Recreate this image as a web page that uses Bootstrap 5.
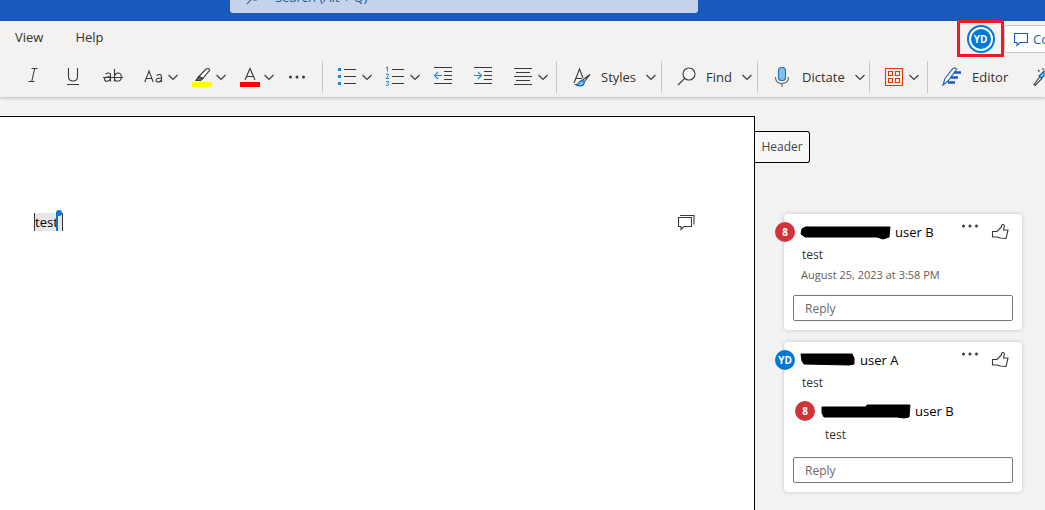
<!DOCTYPE html>
<html lang="en">
<head>
<meta charset="utf-8">
<meta name="viewport" content="width=device-width, initial-scale=1">
<title>Document editor</title>
<link href="https://cdn.jsdelivr.net/npm/bootstrap@5.3.0/dist/css/bootstrap.min.css" rel="stylesheet">
<style>
  body { font-family: "Open Sans", "Noto Sans", sans-serif; font-size: 13px; line-height: 20px; color: #323130; background: #f2f2f2; overflow: hidden; }
  svg { display: block; flex: none; fill: none; stroke: #3b3a39; stroke-width: 1.1; overflow: visible; }
  button { font: inherit; color: inherit; background: none; border: 0; padding: 0; }
  .app-top { height: 21px; background: #185abd; overflow: hidden; }
  .app-search { flex: 0 0 468px; height: 32px; margin: -19px 0 0 22%; background: #c5d3e8; border-radius: 3px; padding: 0 16px; gap: 13px; }
  .app-search input { border: 0; background: none; padding: 0; font-size: 13px; color: #2b579a; outline: 0; }
  .app-search input::placeholder { color: #2b579a; opacity: 1; }
  .ribbon { background: #f3f2f1; box-shadow: 0 1px 3px rgba(0,0,0,.25); }
  .tabs { height: 36px; }
  .tabs nav { gap: 32px; padding: 0 0 4px 15px; }
  .tabs a { color: #323130; text-decoration: none; }
  .tabs-end { flex: 0 0 88px; min-width: 0; overflow-x: clip; }
  .presence { flex: 0 0 47px; height: 37px; margin-top: -1px; border: 3px solid #ed1c24; }
  .face { width: 20px; height: 20px; border-radius: 50%; flex: none; color: #fff; font-size: 10px; font-weight: 700; line-height: 20px; text-align: center; background: #0078d7; }
  .face-red { background: #d13438; }
  .face-lg { width: 28px; height: 28px; line-height: 20px; border: 2px solid #0078d7; padding: 2px; background: #fff; }
  .face-lg span { display: block; border-radius: 50%; background: #0078d7; }
  .comments-btn { flex: none; height: 28px; margin-top: 4px; border: 1px solid #c8c6c4; border-radius: 3px; background: #fff; color: #185abd; padding: 0 9px; gap: 4px; }
  .tools { height: 40px; padding-left: 13px; overflow-x: clip; }
  .tool { flex: 0 0 40px; height: 40px; }
  .tool-split { flex: 0 0 48px; padding-left: 11px; gap: 3px; height: 40px; }
  .tool-text { flex: none; height: 40px; padding: 0 7px 0 11px; gap: 9px; text-align: left; }
  .w-styles { width: 95px; } .w-find { width: 86px; } .w-dictate { width: 102px; } .w-editor { width: 90px; }
  .rule { flex: 0 0 1px; height: 32px; background: #c8c6c4; margin: 0 4px 0 5px; }
  .paper { background: #fff; border: solid #000; border-width: 1px 1px 0 0; padding: 96px 60px 0 34px; }
  .desk { padding-top: 19px; }
  .selected-text { background: #e6e6e6; color: #000; height: 18px; line-height: 18px; border: solid #333; border-width: 0 1px; padding-right: 4px; position: relative; font-size: 13px; }
  .caret { position: absolute; top: 0; left: 21px; width: 2px; height: 18px; background: #0078d7; }
  .caret::before { content: ""; position: absolute; top: -3px; left: 0; width: 6px; height: 6px; border-radius: 50%; background: #0078d7; }
  .review { flex: 0 0 290px; }
  .header-tag { margin-top: 15px; width: 55px; height: 32px; font-size: 12px; background: #f8f8f8; border: 1px solid #000; border-left: 0; border-radius: 0 3px 3px 0; color: #444; }
  .threads { margin: 51px 23px 0 29px; gap: 12px; }
  .thread { background: #fff; border-radius: 4px; box-shadow: 0 0 4px rgba(0,0,0,.18); padding: 7px 9px 9px; }
  .who { height: 22px; margin-left: -18px; gap: 6px; color: #000; font-size: 13px; }
  .who-reply { margin: 7px 0 0 2px; }
  .who svg.ink { fill: #000; stroke: #000; stroke-width: 1; }
  .who .acts { gap: 12px; padding-right: 4px; }
  .said { font-size: 12px; padding-left: 9px; margin: 2px 0 0; }
  .stamp { font-size: 11px; padding-left: 8px; margin: 0; color: #605e5c; }
  .said-reply { padding: 0 0 2px 32px; margin-top: 3px; }
  .answer { width: 100%; height: 26px; border: 1px solid #767676; border-radius: 2px; padding: 0 11px; font-size: 12px; display: block; margin-top: 10px; background: #fff; }
  .answer::placeholder { color: #6b6967; opacity: 1; }
</style>
</head>
<body class="d-flex flex-column min-vh-100">
<svg width="0" height="0" class="position-absolute" aria-hidden="true">
  <symbol id="chev" viewBox="0 0 12 20"><path d="M1.500 8 6 12.500 10.500 8"/></symbol>
  <symbol id="thumb" viewBox="0 0 18 18"><path d="M1.500 8.500h4.500L10.500 4V2.500q1.500-2 3 0L12.500 7h4.500l-2 8.500-6-.500-2.500-1h-5z"/></symbol>
  <symbol id="dots" viewBox="0 0 18 6"><g fill="#3b3a39" stroke="none"><circle cx="2.500" cy="3" r="1.500"/><circle cx="9" cy="3" r="1.500"/><circle cx="15.500" cy="3" r="1.500"/></g></symbol>
</svg>

<header>
  <div class="app-top d-flex">
    <label class="app-search d-flex align-items-center">
      <svg width="16" height="16"><g stroke="#2b579a"><circle cx="9" cy="6" r="5"/><path d="M5.500 10 1 15"/></g></svg>
      <input class="flex-grow-1" type="text" placeholder="Search (Alt + Q)" aria-label="Search">
    </label>
  </div>
  <div class="ribbon">
    <div class="tabs d-flex">
      <nav class="d-flex align-items-center"><a href="#">View</a><a href="#">Help</a></nav>
      <div class="tabs-end d-flex ms-auto">
        <div class="presence d-flex align-items-center justify-content-center"><div class="face face-lg"><span>YD</span></div></div>
        <button class="comments-btn d-flex align-items-center"><svg width="15" height="16"><path stroke="#185abd" d="M.5 2.500h13v9H6l-3 3v-3H.5z"/></svg>Comments</button>
      </div>
    </div>
    <div class="tools d-flex align-items-center">
      <button class="tool d-flex align-items-center justify-content-center" aria-label="Italic"><svg width="20" height="20"><path d="M8.500 1.500h6M5.500 14.500h6M11.700 1.500l-3 13"/></svg></button>
      <button class="tool d-flex align-items-center justify-content-center" aria-label="Underline"><svg width="20" height="20"><path d="M5.500 1v8.500q0 4.500 4.500 4.500t4.500-4.500V1M4 17.500h12"/></svg></button>
      <button class="tool d-flex align-items-center justify-content-center" aria-label="Strikethrough"><svg width="20" height="20"><path d="M2.500 7q3-2 5 0v7.500M7.500 10q-6-.5-6 2.200 0 2 2.500 2 3 0 3.500-3M11.500 2v12.500M11.500 9q1-3 3.500-3 3.300 0 3.300 4t-3.600 4.200q-3.200 0-3.200-3M0 10.500h20"/></svg></button>
      <button class="tool-split d-flex align-items-center" aria-label="Change case"><svg width="20" height="20"><path d="M.8 15 5 4l4.200 11M2.300 11.500h5.400M12.500 8.500q5-2.500 5 1.500v5M17.500 11q-5.500-.2-5.500 2.200 0 1.800 2.200 1.800 2.600 0 3.300-2.500"/></svg><svg width="12" height="20"><use href="#chev"/></svg></button>
      <button class="tool-split d-flex align-items-center" aria-label="Highlight colour"><svg width="20" height="20"><path fill="#fff" d="M7 9.500 14 2q3-1.500 3.500 1.500L10.500 11.500z"/><path fill="#666" d="M6.500 9.500 4 13.500h4.500l2.500-2z"/><path fill="yellow" stroke="none" d="M0 15h20v5H0z"/></svg><svg width="12" height="20"><use href="#chev"/></svg></button>
      <button class="tool-split d-flex align-items-center" aria-label="Font colour"><svg width="20" height="20"><path d="m5 13 5-11.500L15 13M6.700 9.500h6.600"/><path fill="red" stroke="none" d="M0 15h20v5H0z"/></svg><svg width="12" height="20"><use href="#chev"/></svg></button>
      <button class="tool d-flex align-items-center justify-content-center" aria-label="More font options"><svg width="18" height="6"><use href="#dots"/></svg></button>
      <span class="rule"></span>
      <button class="tool-split d-flex align-items-center" aria-label="Bullets"><svg width="20" height="20"><path d="M6 2.500h12M6 9.500h12M6 16.500h12"/><path fill="#1e8bcd" stroke="none" d="M0 1h3v3H0zM0 8h3v3H0zM0 15h3v3H0z"/></svg><svg width="12" height="20"><use href="#chev"/></svg></button>
      <button class="tool-split d-flex align-items-center" aria-label="Numbering"><svg width="20" height="20"><path d="M6 2.500h12M6 9.500h12M6 16.500h12"/><path stroke="#1e8bcd" stroke-width="1" d="M0 .8 1.500 0v4.500M0 7.500q3-1.500 2.500.7L0 11.500h3M0 14.500h2.700L1.500 16.300q1.500.2 1 1.700-.8 1-2.500.3"/></svg><svg width="12" height="20"><use href="#chev"/></svg></button>
      <button class="tool d-flex align-items-center justify-content-center" aria-label="Decrease indent"><svg width="20" height="20"><path d="M1 .5h18M11 4.500h8M11 8.500h8M11 12.500h8M1 16.500h18"/><path stroke="#1e8bcd" d="M9 8.500H1.500M5 5 1.500 8.500 5 12"/></svg></button>
      <button class="tool d-flex align-items-center justify-content-center" aria-label="Increase indent"><svg width="20" height="20"><path d="M1 .5h18M11 4.500h8M11 8.500h8M11 12.500h8M1 16.500h18"/><path stroke="#1e8bcd" d="M1 8.500h7.500M5 5l3.500 3.500L5 12"/></svg></button>
      <button class="tool-split d-flex align-items-center" aria-label="Alignment"><svg width="20" height="20"><path d="M0 1.500h18M2 5.500h14M0 9.500h18M2 13.500h14M0 17.500h18"/></svg><svg width="12" height="20"><use href="#chev"/></svg></button>
      <span class="rule"></span>
      <button class="tool-text w-styles d-flex align-items-center"><svg width="20" height="20"><path d="M2 16 7.500 2l3.500 9M4 11.500h6"/><path fill="#fff" d="M18 7.500 10 13.500l2 1.500z"/><path fill="#83beec" stroke="#0063b1" d="M10 13.500q-3 .5-3.500 3.500l-3 .500q5 3 8 0 1.300-1.500.5-3z"/></svg><span class="flex-grow-1">Styles</span><svg width="12" height="20"><use href="#chev"/></svg></button>
      <span class="rule"></span>
      <button class="tool-text w-find d-flex align-items-center"><svg width="20" height="20"><circle cx="12" cy="7" r="6" fill="#fafafa"/><path d="M7.500 11.500 1 18"/></svg><span class="flex-grow-1">Find</span><svg width="12" height="20"><use href="#chev"/></svg></button>
      <span class="rule"></span>
      <button class="tool-text w-dictate d-flex align-items-center"><svg width="20" height="20"><rect x="5.500" y=".5" width="7" height="13" rx="3" fill="#83beec" stroke="#1e72b8"/><path stroke="#605e5c" d="M2.500 10q0 6.500 6.500 6.500t6.500-6.500M9 16.500V20"/></svg><span class="flex-grow-1">Dictate</span><svg width="12" height="20"><use href="#chev"/></svg></button>
      <span class="rule"></span>
      <button class="tool-split d-flex align-items-center" aria-label="Add-ins"><svg width="20" height="20"><path stroke="#d83b01" d="M.5 1.500h17v17H.5zM3.500 4.500h4v4h-4zM10.500 4.500h4v4h-4zM3.500 11.500h4v4h-4zM10.500 11.500h4v4h-4z"/></svg><svg width="12" height="20"><use href="#chev"/></svg></button>
      <span class="rule"></span>
      <button class="tool-text w-editor d-flex align-items-center"><svg width="20" height="20"><path fill="#fff" stroke="#185abd" d="M0 18 2 11.500 10 1.500q2.500-1.500 3.500 1L5 14z"/><path stroke="#185abd" stroke-width="2.500" d="M11 5.500h7M8 10.500h7M5 15.500h7"/></svg><span>Editor</span></button>
      <button class="tool-text d-flex align-items-center" aria-label="Designer"><svg width="20" height="20"><path fill="#fff" d="m1 17.500 6-8 2 2-7 7z"/><path fill="#83beec" stroke="#0063b1" d="m6 9 5-5v5l-2.500 2z"/><path d="m5 3 1.500 1.500M10 1v2"/></svg></button>
    </div>
  </div>
</header>

<main class="desk d-flex flex-grow-1">
  <section class="paper flex-grow-1 d-flex align-items-start justify-content-between">
    <div class="selected-text">test<span class="caret"></span></div>
    <button aria-label="Show comments"><svg width="17" height="18"><path fill="#fff" d="M1.500 4.500h13v9H7L4 16.500v-3H1.500z"/><path d="M3 2.500h14v9"/></svg></button>
  </section>
  <aside class="review">
    <button class="header-tag d-flex align-items-center justify-content-center">Header</button>
    <div class="threads d-flex flex-column">
      <article class="thread">
        <div class="who d-flex align-items-center">
          <span class="face face-red">8</span>
          <svg class="ink" width="88" height="13"><path d="M1 3Q4 0 9 1L89 1 88 11 85 12 82 13 76 11 4 11 0 8z"/></svg>
          <span class="flex-grow-1">user B</span>
          <span class="acts d-flex align-items-start"><button aria-label="More actions"><svg width="18" height="6"><use href="#dots"/></svg></button><button aria-label="Like"><svg width="18" height="18"><use href="#thumb"/></svg></button></span>
        </div>
        <p class="said">test</p>
        <p class="stamp">August 25, 2023 at 3:58 PM</p>
        <input class="answer" type="text" placeholder="Reply" aria-label="Reply to user B">
      </article>
      <article class="thread">
        <div class="who d-flex align-items-center">
          <span class="face">YD</span>
          <svg class="ink" width="53" height="12"><path d="M0 0 51 0 53 4 53 10 48 11 3 10 1 7z"/></svg>
          <span class="flex-grow-1">user A</span>
          <span class="acts d-flex align-items-start"><button aria-label="More actions"><svg width="18" height="6"><use href="#dots"/></svg></button><button aria-label="Like"><svg width="18" height="18"><use href="#thumb"/></svg></button></span>
        </div>
        <p class="said">test</p>
        <div class="who who-reply d-flex align-items-center">
          <span class="face face-red">8</span>
          <svg class="ink" width="88" height="13"><path d="M1 2 45 2 46 0 89 0 88 12 83 13 76 12 3 12 1 8z"/></svg>
          <span>user B</span>
        </div>
        <p class="said said-reply">test</p>
        <input class="answer" type="text" placeholder="Reply" aria-label="Reply to user A">
      </article>
    </div>
  </aside>
</main>
<script src="https://cdn.jsdelivr.net/npm/bootstrap@5.3.0/dist/js/bootstrap.bundle.min.js"></script>
</body>
</html>
